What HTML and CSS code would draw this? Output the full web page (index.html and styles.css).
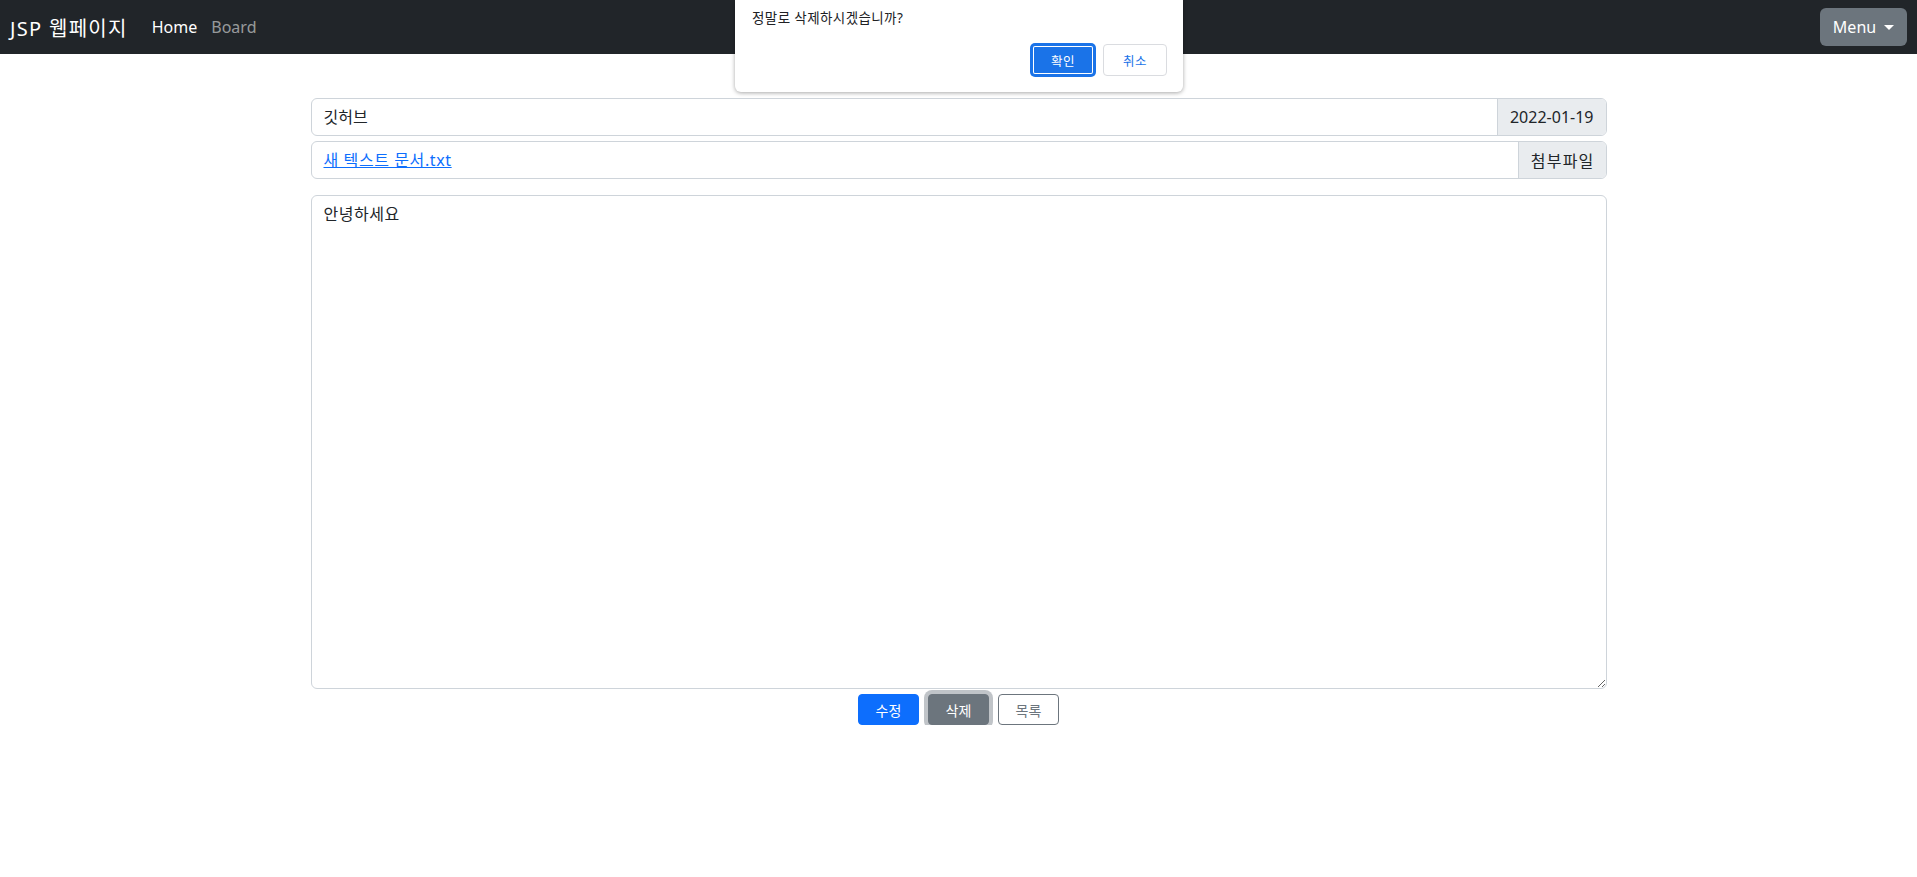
FILE: index.html
```html
<!DOCTYPE html>
<html lang="ko">
  <head>
    <meta charset="UTF-8">
    <title>JSP 웹페이지 - 글 보기</title>
    <link rel="stylesheet" href="styles.css">
  </head>
  <body>
    <nav class="navbar">
      <div class="nav-left">
        <a class="brand" href="#">JSP 웹페이지</a>
        <a class="nav-link active" href="#">Home</a>
        <a class="nav-link" href="#">Board</a>
      </div>
      <button class="btn-menu">Menu <span class="caret"></span></button>
    </nav>

    <div class="dialog">
      <p class="dialog-msg">정말로 삭제하시겠습니까?</p>
      <div class="dialog-actions">
        <button class="dlg-btn ok">확인</button>
        <button class="dlg-btn cancel">취소</button>
      </div>
    </div>

    <div class="container">
      <div class="input-group">
        <div class="field">깃허브</div>
        <span class="addon">2022-01-19</span>
      </div>
      <div class="input-group">
        <div class="field"><a href="#">새 텍스트 문서.txt</a></div>
        <span class="addon ko">첨부파일</span>
      </div>
      <textarea class="content" rows="20" readonly>안녕하세요</textarea>
      <div class="actions">
        <button class="btn primary">수정</button>
        <button class="btn secondary focus">삭제</button>
        <button class="btn outline">목록</button>
      </div>
    </div>
  </body>
</html>
```

FILE: styles.css
```css
* {
  margin: 0;
  padding: 0;
  box-sizing: border-box;
}

body {
  font-family: "Noto Sans", "Noto Sans CJK KR", sans-serif;
  font-size: 16px;
  color: #212529;
  background: #fff;
}

/* 상단 네비게이션 */
.navbar {
  height: 54px;
  background: #212529;
  display: flex;
  align-items: center;
  justify-content: space-between;
  padding: 0 10px 0 10px;
}

.nav-left {
  display: flex;
  align-items: center;
}

.brand {
  color: #fff;
  font-size: 20px;
  text-decoration: none;
  margin-right: 17px;
  letter-spacing: 1.3px;
}

.nav-link {
  color: rgba(255, 255, 255, .55);
  font-size: 16px;
  text-decoration: none;
  padding: 0 7px;
}

.nav-link.active {
  color: #fff;
}

.btn-menu {
  width: 87px;
  height: 38px;
  background: #6c757d;
  border: 0;
  border-radius: 6px;
  color: #fff;
  font-family: inherit;
  font-size: 16px;
  display: flex;
  align-items: center;
  justify-content: center;
  gap: 8px;
}

.caret {
  width: 0;
  height: 0;
  border-left: 5px solid transparent;
  border-right: 5px solid transparent;
  border-top: 5px solid #fff;
}

/* 브라우저 확인창 */
.dialog {
  position: absolute;
  top: 0;
  left: 735px;
  width: 448px;
  height: 92px;
  background: #fff;
  border-radius: 0 0 6px 6px;
  box-shadow: 0 1px 4px rgba(0, 0, 0, .35);
  padding: 9px 16px 0 17px;
}

.dialog-msg {
  font-size: 13.5px;
  color: #202124;
  line-height: 18px;
  letter-spacing: 0.4px;
}

.dialog-actions {
  display: flex;
  justify-content: flex-end;
  gap: 8px;
  margin-top: 17px;
}

.dlg-btn {
  width: 64px;
  height: 32px;
  border-radius: 4px;
  font-family: inherit;
  font-size: 12.5px;
  letter-spacing: 0.5px;
}

.dlg-btn.ok {
  background: #1a73e8;
  color: #fff;
  border: 1px solid #1a73e8;
  box-shadow: 0 0 0 2px #fff inset, 0 0 0 1px #1a73e8;
  outline: 2px solid #1a73e8;
  outline-offset: -2px;
}

.dlg-btn.cancel {
  background: #fff;
  color: #1a73e8;
  border: 1px solid #dadce0;
}

/* 본문 */
.container {
  width: 1296px;
  margin: 0 auto;
  padding-top: 44px;
}

.input-group {
  display: flex;
  height: 38px;
  border: 1px solid #ced4da;
  border-radius: 6px;
  margin-bottom: 5px;
  overflow: hidden;
}

.field {
  flex: 1;
  display: flex;
  align-items: center;
  padding: 0 12px;
  line-height: 24px;
}

.field a {
  color: #0d6efd;
  letter-spacing: 0.6px;
}

.addon {
  display: flex;
  align-items: center;
  padding: 0 12px;
  background: #e9ecef;
  border-left: 1px solid #ced4da;
}

.addon.ko {
  letter-spacing: 1.2px;
  padding-right: 11px;
}

.content {
  display: block;
  width: 100%;
  margin-top: 16px;
  padding: 6px 12px;
  border: 1px solid #ced4da;
  border-radius: 6px;
  font-family: inherit;
  font-size: 16px;
  line-height: 24px;
  letter-spacing: 0.5px;
  color: #212529;
  resize: vertical;
  outline: none;
}

.actions {
  display: flex;
  justify-content: center;
  gap: 9px;
  margin-top: 5px;
}

.btn {
  width: 61px;
  height: 31px;
  border-radius: 4px;
  font-family: inherit;
  font-size: 14px;
  border: 1px solid transparent;
}

.btn.primary {
  background: #0d6efd;
  border-color: #0d6efd;
  color: #fff;
}

.btn.secondary {
  background: #6c757d;
  border-color: #6c757d;
  color: #fff;
}

.btn.focus {
  box-shadow: 0 0 0 4px rgba(130, 138, 145, .5);
}

.btn.outline {
  background: #fff;
  border-color: #6c757d;
  color: #6c757d;
}
```
